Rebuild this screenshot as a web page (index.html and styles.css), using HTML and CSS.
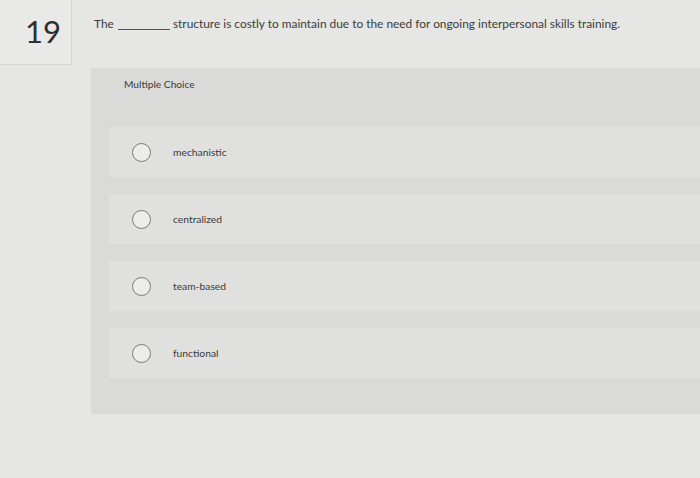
FILE: index.html
```html
<!DOCTYPE html>
<html>
<head>
<meta charset="utf-8">
<link rel="stylesheet" href="styles.css">
</head>
<body>
<div class="page">
  <div class="top">
    <div class="num">19</div>
    <div class="question">The <span class="blank"></span> structure is costly to maintain due to the need for ongoing interpersonal skills training.</div>
  </div>
  <div class="panel">
    <div class="kind">Multiple Choice</div>
    <div class="options">
      <div class="opt"><span class="radio"></span><span class="label">mechanistic</span></div>
      <div class="opt"><span class="radio"></span><span class="label">centralized</span></div>
      <div class="opt"><span class="radio"></span><span class="label">team-based</span></div>
      <div class="opt"><span class="radio"></span><span class="label">functional</span></div>
    </div>
  </div>
</div>
</body>
</html>
```
FILE: styles.css
```css
html, body {
  margin: 0;
  padding: 0;
}
body {
  width: 700px;
  height: 478px;
  overflow: hidden;
  background: #e6e6e4;
  font-family: "Lato", "Open Sans", sans-serif;
  color: #3a3a3a;
}
.page {
  display: flex;
  flex-direction: column;
}
.top {
  display: flex;
  align-items: flex-start;
  height: 68px;
}
.num {
  width: 72px;
  height: 65px;
  box-sizing: border-box;
  border-right: 1px solid #d6d6d4;
  border-bottom: 1px solid #d6d6d4;
  background: #e9e9e7;
  font-size: 31px;
  font-weight: 400;
  color: #2e2e2e;
  padding: 16px 0 0 25px;
  line-height: 1;
}
.question {
  margin-left: 22px;
  margin-top: 16px;
  font-size: 11.9px;
  color: #3c3c3c;
  line-height: 15px;
}
.blank {
  display: inline-block;
  width: 52px;
  border-bottom: 1px solid #555;
  vertical-align: -2px;
  margin: 0 0 0 1px;
  height: 1px;
}
.panel {
  margin-left: 91px;
  height: 346px;
  background: #dadad8;
  display: flex;
  flex-direction: column;
}
.kind {
  font-size: 10.2px;
  color: #3a3a3a;
  padding: 10px 0 0 33px;
  height: 59px;
  box-sizing: border-box;
}
.options {
  display: flex;
  flex-direction: column;
  gap: 17px;
  padding-left: 18px;
}
.opt {
  height: 50px;
  background: #e0e0de;
  display: flex;
  align-items: center;
  padding-left: 23px;
}
.radio {
  width: 19px;
  height: 19px;
  border: 1.3px solid #7a7a7a;
  border-radius: 50%;
  box-sizing: border-box;
  background: #ececea;
}
.label {
  margin-left: 22px;
  font-size: 10.3px;
  color: #3a3a3a;
}
```
